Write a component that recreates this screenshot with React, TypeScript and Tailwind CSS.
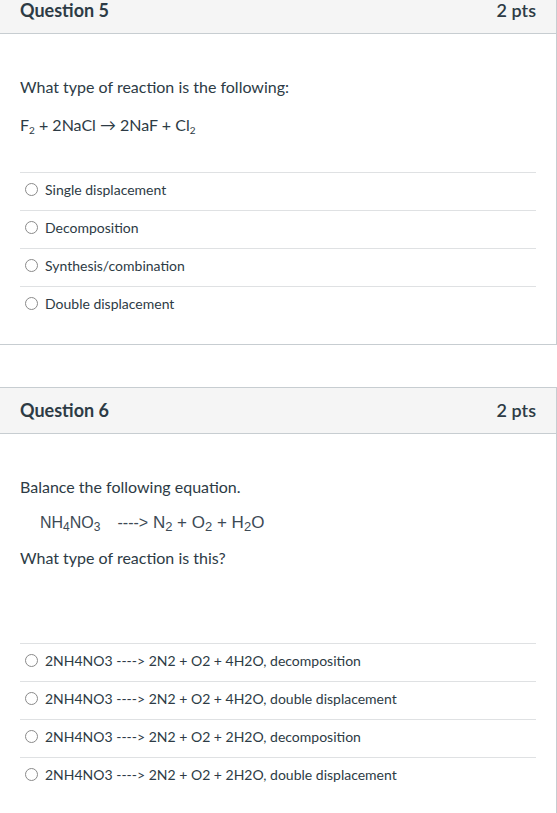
import React from 'react';

const lato = { fontFamily: 'Lato, "Open Sans", sans-serif' };

function Radio() {
  return (
    <span className="inline-block w-[13px] h-[13px] rounded-full border border-[#8a8a8a] bg-white shrink-0" />
  );
}

function Answer({ text }: { text: React.ReactNode }) {
  return (
    <div className="h-[38px] border-t border-[#dfe1e3] flex items-center pl-[5px] pb-[4px] gap-[7px] text-[14px] text-[#2d3b45]">
      <Radio />
      <span>{text}</span>
    </div>
  );
}

function Header({ title }: { title: string }) {
  return (
    <div className="h-[46px] bg-[#f5f5f5] border-b border-[#c7cdd1] flex items-center justify-between px-5">
      <span className="text-[18px] font-bold text-[#2d3b45]">{title}</span>
      <span className="text-[18px] font-semibold text-[#2d3b45]">2 pts</span>
    </div>
  );
}

export default function App() {
  const q6Answers = [
    '2NH4NO3 ----> 2N2 + O2 + 4H2O, decomposition',
    '2NH4NO3 ----> 2N2 + O2 + 4H2O, double displacement',
    '2NH4NO3 ----> 2N2 + O2 + 2H2O, decomposition',
    '2NH4NO3 ----> 2N2 + O2 + 2H2O, double displacement',
  ];

  return (
    <div className="bg-white min-h-screen overflow-hidden" style={lato}>
      {/* Question 5 */}
      <div className="w-[558px] -ml-px -mt-[13px] border border-[#c7cdd1]">
        <Header title="Question 5" />
        <div className="px-5 pt-[41px] pb-5 text-[#2d3b45]">
          <p className="text-[16px] leading-[24px]">What type of reaction is the following:</p>
          <p className="text-[16px] leading-[24px] mt-[14px]">
            F<sub className="text-[10px]">2</sub> + 2NaCl → 2NaF + Cl<sub className="text-[10px]">2</sub>
          </p>
          <div className="mt-[35px]">
            <Answer text="Single displacement" />
            <Answer text="Decomposition" />
            <Answer text="Synthesis/combination" />
            <Answer text="Double displacement" />
          </div>
        </div>
      </div>

      {/* Question 6 */}
      <div className="w-[558px] -ml-px mt-[42px] border border-[#c7cdd1]">
        <Header title="Question 6" />
        <div className="px-5 pt-[41px] pb-5 text-[#2d3b45]">
          <p className="text-[16px] leading-[24px]">Balance the following equation.</p>
          <p
            className="text-[16px] leading-[24px] mt-[12px] pl-5 text-[#3d4a55]"
            style={{ fontFamily: '"Liberation Sans", Arial, sans-serif' }}
          >
            NH<sub className="text-[12px]">4</sub>NO<sub className="text-[12px]">3</sub>
            <span className="inline-block w-[17px]" />
            <span className="text-[16px]">----&gt;</span>
            <span className="text-[17px]">
              {' '}N<sub className="text-[13px]">2</sub> + O<sub className="text-[13px]">2</sub> + H
              <sub className="text-[13px]">2</sub>O
            </span>
          </p>
          <p className="text-[16px] leading-[24px] mt-[11px]">What type of reaction is this?</p>
          <div className="mt-[73px]">
            {q6Answers.map((a) => (
              <Answer key={a} text={a} />
            ))}
          </div>
        </div>
      </div>
    </div>
  );
}
